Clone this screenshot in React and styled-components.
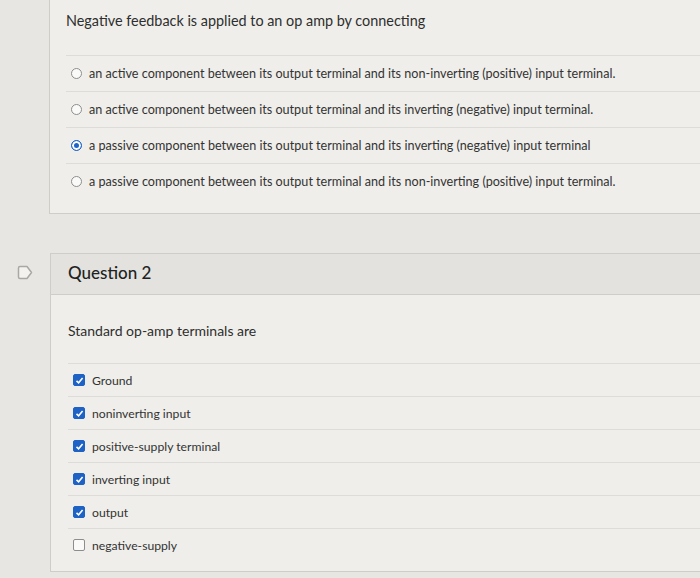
import styled, { createGlobalStyle } from "styled-components";

const GlobalStyle = createGlobalStyle`
  html, body {
    margin: 0;
    padding: 0;
    background: #e7e6e2;
    overflow: hidden;
  }
  body {
    font-family: Lato, "Open Sans", "Liberation Sans", sans-serif;
    color: #2e2e2e;
  }
`;

const Page = styled.div`
  width: 700px;
  height: 578px;
  display: flex;
  flex-direction: column;
  gap: 39px;
`;

const QuestionRow = styled.div`
  display: grid;
  grid-template-columns: ${(p) => p.$gutter}px 1fr;
  margin-right: -20px;
`;

const Gutter = styled.div`
  display: flex;
  justify-content: flex-start;
  padding: 12px 0 0 17px;
`;

const Card = styled.div`
  background: #efeeea;
  border: 1px solid #cfcdc8;
  border-top: ${(p) => (p.$open ? "none" : "1px solid #cfcdc8")};
  border-right: none;
`;

const CardHeader = styled.div`
  height: 41px;
  box-sizing: border-box;
  display: flex;
  align-items: center;
  padding: 0 0 3px 17px;
  background: #e3e2de;
  border-bottom: 1px solid #cfcdc8;
  font-size: 17px;
  font-weight: 500;
  color: #222;
`;

const CardBody = styled.div`
  padding: ${(p) => p.$top}px 0 ${(p) => p.$bottom}px ${(p) => p.$left}px;
`;

const QuestionText = styled.div`
  font-size: ${(p) => p.$size}px;
  line-height: 18px;
  margin-bottom: ${(p) => p.$gap}px;
`;

const AnswerList = styled.div`
  display: flex;
  flex-direction: column;
`;

const Answer = styled.div`
  height: ${(p) => p.$h}px;
  display: flex;
  align-items: center;
  gap: ${(p) => p.$gap}px;
  padding-left: ${(p) => p.$indent}px;
  border-top: 1px solid #dddcd8;
  font-size: ${(p) => p.$size}px;
  color: #333;
`;

const Radio = styled.span`
  width: 11px;
  height: 11px;
  box-sizing: border-box;
  border-radius: 50%;
  flex-shrink: 0;
  border: 1px solid ${(p) => (p.$on ? "#1e64c8" : "#8d8d8d")};
  background: ${(p) => (p.$on ? "#1e64c8" : "#fafaf8")};
  box-shadow: ${(p) => (p.$on ? "inset 0 0 0 2px #fff" : "none")};
`;

const Check = styled.span`
  width: 12px;
  height: 12px;
  box-sizing: border-box;
  border-radius: 2px;
  flex-shrink: 0;
  display: flex;
  align-items: center;
  justify-content: center;
  border: 1px solid ${(p) => (p.$on ? "#1d62c4" : "#8d8d8d")};
  background: ${(p) => (p.$on ? "#1d62c4" : "#fafaf8")};
`;

const Bookmark = () => (
  <svg width="16" height="15" viewBox="0 0 16 15">
    <path
      d="M3 1.5 H10 L14.5 7.5 L10 13.5 H3 Q1.5 13.5 1.5 12 V3 Q1.5 1.5 3 1.5 Z"
      fill="#f3f2ef"
      stroke="#a9a8a4"
      strokeWidth="1.5"
      strokeLinejoin="round"
    />
  </svg>
);

const Tick = () => (
  <svg width="9" height="9" viewBox="0 0 9 9">
    <path d="M1.5 4.8 L3.6 6.8 L7.6 2" fill="none" stroke="#fff" strokeWidth="1.6" />
  </svg>
);

const q1 = [
  "an active component between its output terminal and its non-inverting (positive) input terminal.",
  "an active component between its output terminal and its inverting (negative) input terminal.",
  "a passive component between its output terminal and its inverting (negative) input terminal",
  "a passive component between its output terminal and its non-inverting (positive) input terminal.",
];

const q2 = [
  { label: "Ground", on: true },
  { label: "noninverting input", on: true },
  { label: "positive-supply terminal", on: true },
  { label: "inverting input", on: true },
  { label: "output", on: true },
  { label: "negative-supply", on: false },
];

export default function App() {
  return (
    <>
      <GlobalStyle />
      <Page>
        <QuestionRow $gutter={49}>
          <div />
          <Card $open>
            <CardBody $top={12} $bottom={14} $left={16}>
              <QuestionText $size={14.4} $gap={25}>
                Negative feedback is applied to an op amp by connecting
              </QuestionText>
              <AnswerList>
                {q1.map((text, i) => (
                  <Answer key={i} $h={35} $gap={7} $indent={5} $size={12.6}>
                    <Radio $on={i === 2} />
                    {text}
                  </Answer>
                ))}
              </AnswerList>
            </CardBody>
          </Card>
        </QuestionRow>

        <QuestionRow $gutter={50}>
          <Gutter>
            <Bookmark />
          </Gutter>
          <Card>
            <CardHeader>Question 2</CardHeader>
            <CardBody $top={27} $bottom={10} $left={17}>
              <QuestionText $size={14} $gap={23}>
                Standard op-amp terminals are
              </QuestionText>
              <AnswerList>
                {q2.map((item) => (
                  <Answer key={item.label} $h={32} $gap={7} $indent={5} $size={12.2}>
                    <Check $on={item.on}>{item.on && <Tick />}</Check>
                    {item.label}
                  </Answer>
                ))}
              </AnswerList>
            </CardBody>
          </Card>
        </QuestionRow>
      </Page>
    </>
  );
}
